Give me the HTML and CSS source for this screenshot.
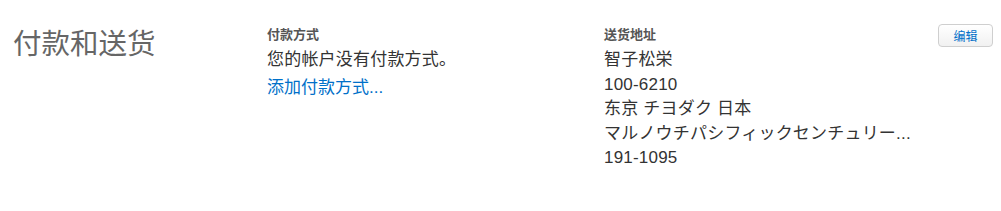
FILE: index.html
```html
<!DOCTYPE html>
<html lang="zh-CN">
<head>
<meta charset="utf-8">
<link rel="stylesheet" href="styles.css">
</head>
<body>
<section class="row">
  <h2 class="title">付款和送货</h2>
  <div class="col pay">
    <h3 class="label">付款方式</h3>
    <p class="line">您的帐户没有付款方式。</p>
    <a class="link" href="#">添加付款方式...</a>
  </div>
  <div class="col addr">
    <h3 class="label">送货地址</h3>
    <p class="line">智子松栄</p>
    <p class="line">100-6210</p>
    <p class="line">东京 チヨダク 日本</p>
    <p class="line">マルノウチパシフィックセンチュリー...</p>
    <p class="line">191-1095</p>
  </div>
  <div class="actions">
    <button class="btn" type="button">编辑</button>
  </div>
</section>
</body>
</html>
```
FILE: styles.css
```css
html, body {
  margin: 0;
  padding: 0;
  background: #fff;
}
body {
  font-family: "Liberation Sans", "Noto Sans CJK SC", sans-serif;
  color: #333;
}
.row {
  display: grid;
  grid-template-columns: 254px 337px 334px 55px;
  padding: 24px 0 0 13px;
}
.title {
  margin: 0;
  font-family: "Noto Sans CJK SC", sans-serif;
  font-size: 28.5px;
  font-weight: 400;
  line-height: 36px;
  color: #666;
}
.col {
  display: flex;
  flex-direction: column;
  align-items: flex-start;
}
.label {
  margin: 2px 0 4px;
  font-size: 13px;
  font-weight: 700;
  line-height: 18px;
  color: #555;
}
.line {
  margin: 0;
  font-size: 17px;
  line-height: 24.5px;
  color: #333;
  letter-spacing: 0.2px;
}
.link {
  margin-top: 2px;
  font-size: 17px;
  line-height: 25px;
  color: #0070c9;
  text-decoration: none;
}
.actions {
  display: flex;
  align-items: flex-start;
}
.btn {
  width: 55px;
  height: 23px;
  margin-top: 0;
  padding: 0;
  border: 1px solid #cfcfcf;
  border-radius: 4px;
  background: linear-gradient(#ffffff, #f1f1f1);
  font-family: "Noto Sans CJK SC", sans-serif;
  font-size: 12px;
  color: #0070c9;
  cursor: pointer;
}
```
